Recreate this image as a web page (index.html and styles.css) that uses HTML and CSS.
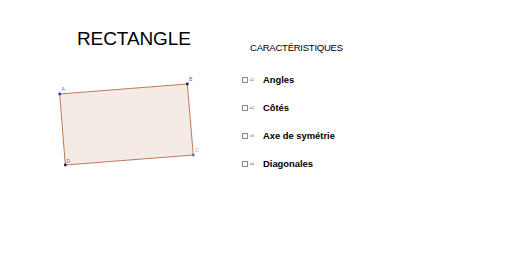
FILE: index.html
```html
<!DOCTYPE html>
<html lang="fr">
<head>
<meta charset="utf-8">
<title>Rectangle</title>
<link rel="stylesheet" href="styles.css">
</head>
<body>
<main class="applet">
  <svg class="canvas" width="512" height="270" viewBox="0 0 512 270">
    <polygon points="59.7,94 187.3,84 193.3,155 65.3,165" fill="#f4ebe6" stroke="#c07a55" stroke-width="1"/>
    <circle cx="59.7" cy="94" r="1.4" fill="#2a2ad8"/>
    <circle cx="187.3" cy="84" r="1.4" fill="#1a1a40"/>
    <circle cx="193.3" cy="155" r="1.4" fill="#6a7090"/>
    <circle cx="65.3" cy="165" r="1.4" fill="#1a1a40"/>
    <text x="61.5" y="91" class="pt">A</text>
    <text x="189" y="81" class="pt">B</text>
    <text x="195" y="152" class="pt pt-c">C</text>
    <text x="66.5" y="163" class="pt">D</text>
  </svg>
  <section class="left">
    <h1 class="title">RECTANGLE</h1>
  </section>
  <section class="right">
    <h2 class="heading">CARACTÉRISTIQUES</h2>
    <ul class="list">
      <li class="row"><span class="box"></span><span class="tag">a1</span><span class="label">Angles</span></li>
      <li class="row"><span class="box"></span><span class="tag">a2</span><span class="label">Côtés</span></li>
      <li class="row"><span class="box"></span><span class="tag">c3</span><span class="label">Axe de symétrie</span></li>
      <li class="row"><span class="box"></span><span class="tag">a4</span><span class="label">Diagonales</span></li>
    </ul>
  </section>
</main>
</body>
</html>
```
FILE: styles.css
```css
html, body {
  margin: 0;
  padding: 0;
  background: #ffffff;
}
body {
  font-family: "Liberation Sans", Arial, sans-serif;
  color: #000;
}
.applet {
  position: relative;
  width: 512px;
  height: 270px;
  display: flex;
  overflow: hidden;
}
.canvas {
  position: absolute;
  left: 0;
  top: 0;
}
.pt {
  font-family: "Liberation Sans", Arial, sans-serif;
  font-size: 5px;
  fill: #6060f0;
}
.pt-c {
  fill: #9a9ac8;
}
.left {
  width: 241px;
  padding-left: 77px;
  box-sizing: border-box;
  position: relative;
}
.title {
  margin: 29px 0 0 0;
  font-size: 19px;
  line-height: 1;
  font-weight: normal;
  letter-spacing: -0.1px;
}
.right {
  position: relative;
  display: flex;
  flex-direction: column;
}
.heading {
  margin: 43px 0 0 9px;
  font-size: 9.6px;
  line-height: 1;
  font-weight: normal;
  letter-spacing: -0.3px;
}
.list {
  list-style: none;
  margin: 21px 0 0 0;
  padding: 0;
  display: flex;
  flex-direction: column;
  gap: 16px;
}
.row {
  height: 12px;
  display: flex;
  align-items: center;
}
.box {
  width: 4px;
  height: 4px;
  border: 1px solid #8a8a8a;
  background: #fff;
  margin-left: 1px;
}
.tag {
  font-size: 4px;
  color: #555;
  margin-left: 1.5px;
  width: 13.5px;
}
.label {
  font-size: 9.4px;
  font-weight: bold;
}
```
